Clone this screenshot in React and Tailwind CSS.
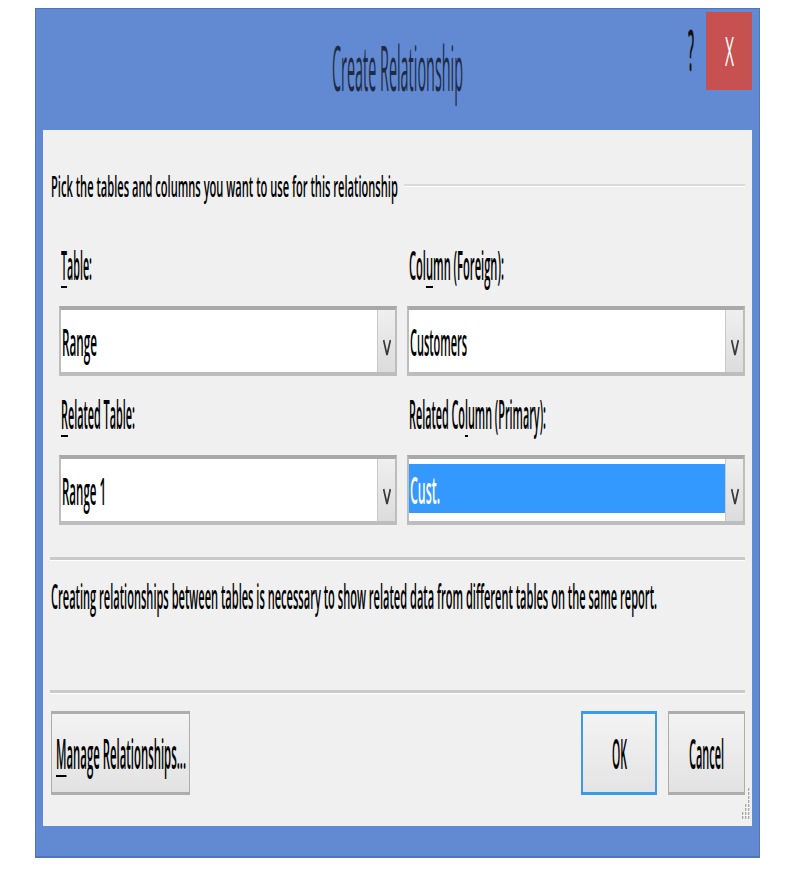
import React, { useLayoutEffect, useRef, useState } from "react";

function T({ box = "", text = "", children }) {
  const ref = useRef(null);
  const [s, setS] = useState(1);
  useLayoutEffect(() => {
    const measure = () => {
      const el = ref.current;
      if (!el) return;
      const natural = el.offsetWidth;
      const target = el.parentElement.getBoundingClientRect().width;
      if (natural > 0) setS(target / natural);
    };
    measure();
    if (document.fonts && document.fonts.ready) document.fonts.ready.then(measure);
  }, []);
  return (
    <span className={`flex shrink-0 leading-none ${box}`}>
      <span
        ref={ref}
        className={`shrink-0 whitespace-nowrap origin-left leading-none ${text}`}
        style={{ transform: `scaleX(${s})` }}
      >
        {children}
      </span>
    </span>
  );
}

const U = ({ children }) => (
  <span className="underline decoration-2 underline-offset-[6px]">{children}</span>
);

function Chevron() {
  return (
    <svg width="8" height="17" viewBox="0 0 8 17" className="mt-[12px]">
      <polyline points="0.6,1 4,16 7.4,1" fill="none" stroke="#3a3a3a" strokeWidth="1.7" />
    </svg>
  );
}

function Combo({ valueBox, value, selected }) {
  return (
    <div className="mt-[22px] h-[70px] flex border-x-2 border-t-4 border-b-4 border-[#bdbdbd] border-t-[#a9a9a9] bg-white">
      {selected ? (
        <div className="flex-1 flex pt-[5px] pb-[8px]">
          <div className="flex-1 flex items-center pl-[1px] bg-[#3399ff]">
            <T box={valueBox} text="text-[38px] font-semibold text-white">{value}</T>
          </div>
        </div>
      ) : (
        <div className="flex-1 flex items-center pl-[1px]">
          <T box={valueBox} text="text-[38px] font-semibold text-black">{value}</T>
        </div>
      )}
      <div className="w-[18px] flex justify-center items-center border-l border-[#c9c9c9] bg-linear-to-b from-[#efefef] to-[#dcdcdc]">
        <Chevron />
      </div>
    </div>
  );
}

function Field({ labelBox, label, valueBox, value, selected }) {
  return (
    <div className="flex flex-col">
      <T box={`ml-[2px] ${labelBox}`} text="text-[39px] font-semibold text-black">{label}</T>
      <Combo valueBox={valueBox} value={value} selected={selected} />
    </div>
  );
}

function Gripper() {
  const dots = [
    [6, 0], [6, 4], [6, 8], [6, 12], [6, 16], [6, 20], [6, 24], [6, 28],
    [3, 16], [3, 20], [3, 24], [3, 28],
    [0, 24], [0, 28],
  ];
  return (
    <svg width="8" height="32" viewBox="0 0 8 32" className="absolute right-[2px] bottom-[6px]">
      {dots.map(([x, y], i) => (
        <g key={i}>
          <rect x={x + 0.6} y={y + 1} width="1.4" height="3" fill="#ffffff" />
          <rect x={x} y={y} width="1.4" height="3" fill="#a9a9a9" />
        </g>
      ))}
    </svg>
  );
}

export default function App() {
  return (
    <div className="w-[806px] h-[874px] bg-white overflow-hidden pt-[8px] pl-[35px] font-['Open_Sans',sans-serif]">
      <div className="w-[725px] h-[850px] flex flex-col px-[7px] bg-[#628ad2] border-x border-t border-b-2 border-[#5275b8]">
        {/* Title bar */}
        <div className="h-[121px] shrink-0 grid grid-cols-[1fr_auto_1fr]">
          <div />
          <T box="w-[131px] mt-[27px]" text="text-[62px] text-[#1f2b45]">Create Relationship</T>
          <div className="flex justify-end items-start">
            <T box="w-[6px] mt-[11px] mr-[12px]" text="text-[58px] font-semibold text-[#111111]">?</T>
            <div className="mt-[3px] w-[46px] h-[78px] bg-[#c75050] flex items-center justify-center">
              <T box="w-[9px]" text="text-[40px] text-white">X</T>
            </div>
          </div>
        </div>

        {/* Client area */}
        <div className="relative h-[696px] shrink-0 flex flex-col bg-[#f0f0f0]">
          <div className="mt-[41px] h-[29px] flex items-center">
            <T box="w-[347px] ml-[8px]" text="text-[29px] font-semibold text-black">
              Pick the tables and columns you want to use for this relationship
            </T>
            <div className="flex-1 ml-[6px] mr-[7px] h-[3px] bg-[#dadada] border-b border-white" />
          </div>

          <div className="mt-[45px] ml-[16px] mr-[7px] grid grid-cols-2 gap-x-[10px] gap-y-[18px]">
            <Field
              labelBox="w-[31px]"
              label={<><U>T</U>able:</>}
              valueBox="w-[35px]"
              value="Range"
            />
            <Field
              labelBox="w-[95px]"
              label={<>Col<U>u</U>mn (Foreign):</>}
              valueBox="w-[57px]"
              value="Customers"
            />
            <Field
              labelBox="w-[74px]"
              label={<><U>R</U>elated Table:</>}
              valueBox="w-[44px]"
              value="Range 1"
            />
            <Field
              labelBox="w-[137px]"
              label={<>Related Co<U>l</U>umn (Primary):</>}
              valueBox="w-[30px]"
              value="Cust."
              selected
            />
          </div>

          <div className="mt-[32px] mx-[7px] h-[4px] bg-[#c9c9c9] border-b border-white" />

          <div className="mt-[18px] flex">
            <T box="w-[606px] ml-[8px]" text="text-[34px] font-semibold text-black">
              Creating relationships between tables is necessary to show related data from different tables on the same report.
            </T>
          </div>

          <div className="mt-[77px] mx-[7px] h-[4px] bg-[#c9c9c9] border-b border-white" />

          <div className="mt-[17px] h-[84px] ml-[8px] mr-[7px] flex">
            <button className="w-[139px] h-full flex items-center justify-center border-x border-y-[3px] border-[#adadad] bg-linear-to-b from-[#f3f3f3] to-[#e2e2e2]">
              <T box="w-[130px]" text="text-[42px] font-semibold text-black">
                <U>M</U>anage Relationships...
              </T>
            </button>
            <button className="ml-auto w-[76px] h-full flex items-center justify-center border-x-2 border-y-[3px] border-[#3c9ae6] bg-linear-to-b from-[#f3f3f3] to-[#e4e4e4]">
              <T box="w-[15px]" text="text-[42px] font-semibold text-black">OK</T>
            </button>
            <button className="ml-[11px] w-[77px] h-full flex items-center justify-center border-x border-y-[3px] border-[#adadad] bg-linear-to-b from-[#f3f3f3] to-[#e2e2e2]">
              <T box="w-[35px]" text="text-[42px] font-semibold text-black">Cancel</T>
            </button>
          </div>

          <Gripper />
        </div>
      </div>
    </div>
  );
}
